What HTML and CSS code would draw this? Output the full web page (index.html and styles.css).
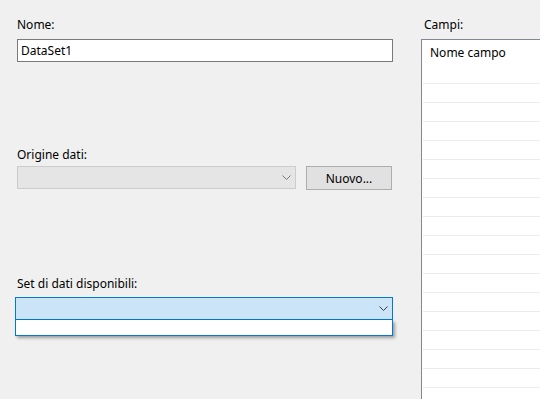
FILE: index.html
```html
<!DOCTYPE html>
<html lang="it">
<head>
  <meta charset="UTF-8">
  <title>Proprietà set di dati</title>
  <link rel="stylesheet" href="styles.css">
</head>
<body>
  <div class="dialog">
    <!-- Colonna sinistra: nome, origine e set di dati -->
    <div class="form-column">
      <label class="field-label" for="nome">Nome:</label>
      <input class="text-box" id="nome" type="text" value="DataSet1">

      <label class="field-label origine-label">Origine dati:</label>
      <div class="origine-row">
        <div class="combo combo-disabled">
          <svg class="chevron" width="9" height="5" viewBox="0 0 9 5"><path d="M0.5 0.5 L4.5 4.5 L8.5 0.5" fill="none" stroke="#7a7a7a" stroke-width="1"/></svg>
        </div>
        <button class="nuovo-button">Nuovo...</button>
      </div>

      <label class="field-label set-label">Set di dati disponibili:</label>
      <div class="combo-open">
        <div class="combo combo-focused">
          <svg class="chevron" width="9" height="5" viewBox="0 0 9 5"><path d="M0.5 0.5 L4.5 4.5 L8.5 0.5" fill="none" stroke="#3c3c3c" stroke-width="1"/></svg>
        </div>
        <div class="drop-list"></div>
      </div>
    </div>

    <!-- Colonna destra: elenco campi -->
    <div class="fields-column">
      <div class="field-label campi-label">Campi:</div>
      <div class="fields-grid">
        <div class="grid-header">Nome campo</div>
        <div class="grid-row"></div>
        <div class="grid-row"></div>
        <div class="grid-row"></div>
        <div class="grid-row"></div>
        <div class="grid-row"></div>
        <div class="grid-row"></div>
        <div class="grid-row"></div>
        <div class="grid-row"></div>
        <div class="grid-row"></div>
        <div class="grid-row"></div>
        <div class="grid-row"></div>
        <div class="grid-row"></div>
        <div class="grid-row"></div>
        <div class="grid-row"></div>
        <div class="grid-row"></div>
        <div class="grid-row"></div>
        <div class="grid-row"></div>
      </div>
    </div>
  </div>
</body>
</html>
```

FILE: styles.css
```css
html, body {
  margin: 0;
  padding: 0;
  height: 100%;
  overflow: hidden;
}

body {
  font-family: "Noto Sans", "DejaVu Sans", sans-serif;
  font-size: 12px;
  color: #000;
  background-color: #f0f0f0;
}

.dialog {
  display: flex;
  padding-top: 17px;
}

.form-column {
  display: flex;
  flex-direction: column;
  width: 376px;
  margin-left: 17px;
}

.field-label {
  display: block;
  height: 16px;
  line-height: 16px;
}

.text-box {
  box-sizing: border-box;
  width: 376px;
  height: 23px;
  margin: 6px 0 0 0;
  padding: 0 3px;
  border: 1px solid #7a7a7a;
  background-color: #fff;
  font: inherit;
  color: #000;
  outline: none;
}

.origine-label {
  margin-top: 85px;
}

.origine-row {
  display: flex;
  align-items: flex-start;
  margin-top: 3px;
}

.combo {
  box-sizing: border-box;
  display: flex;
  align-items: center;
  justify-content: flex-end;
  height: 23px;
}

.combo-disabled {
  width: 279px;
  border: 1px solid #cccccc;
  background-color: #e5e5e5;
  padding-right: 4px;
}

.chevron {
  display: block;
}

.nuovo-button {
  box-sizing: border-box;
  width: 86px;
  height: 24px;
  margin-left: 10px;
  border: 1px solid #adadad;
  background-color: #e1e1e1;
  font: inherit;
  color: #000;
  padding: 0;
}

.set-label {
  margin-top: 86px;
}

.combo-open {
  margin-top: 5px;
  margin-left: -2px;
  width: 378px;
}

.combo-focused {
  width: 378px;
  border: 1px solid #0078d7;
  background-color: #cce4f7;
  padding-right: 4px;
}

.drop-list {
  box-sizing: border-box;
  height: 16px;
  border: 1px solid #0078d7;
  border-top: none;
  background-color: #fff;
  box-shadow: 2px 2px 3px rgba(0, 0, 0, 0.35);
}

.fields-column {
  flex: 1;
  margin-left: 28px;
}

.campi-label {
  padding-left: 3px;
}

.fields-grid {
  margin-top: 6px;
  border-left: 1px solid #828790;
  border-top: 1px solid #828790;
  background-color: #fff;
  height: 360px;
  overflow: hidden;
}

.grid-header {
  height: 43px;
  box-sizing: border-box;
  padding: 5px 0 0 8px;
  line-height: 16px;
}

.grid-row {
  height: 18px;
  margin-left: 1px;
  border-top: 1px solid #ebebeb;
}
```
